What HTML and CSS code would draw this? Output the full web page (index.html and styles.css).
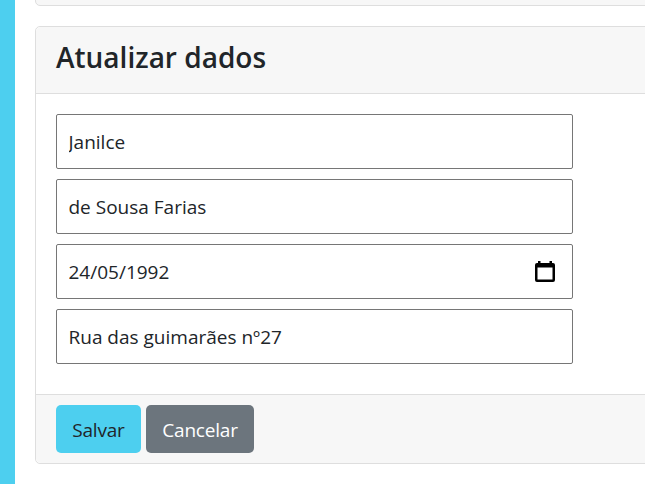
FILE: index.html
```html
<!DOCTYPE html>
<html lang="pt-BR">
<head>
<meta charset="UTF-8">
<meta name="viewport" content="width=device-width, initial-scale=1.0">
<title>Atualizar dados</title>
<link rel="stylesheet" href="styles.css">
</head>
<body>
<div class="sidebar"></div>
<main class="content">
	<div class="card card-previous"></div>
	<section class="card">
		<header class="card-header">
			<h1>Atualizar dados</h1>
		</header>
		<form class="card-body">
			<input class="form-control" type="text" value="Janilce">
			<input class="form-control" type="text" value="de Sousa Farias">
			<div class="date-field">
				<input class="form-control" type="text" value="24/05/1992">
				<svg class="date-icon" viewBox="0 0 20 21" aria-hidden="true">
					<path d="M2 2h16a2 2 0 0 1 2 2v15a2 2 0 0 1-2 2H2a2 2 0 0 1-2-2V4a2 2 0 0 1 2-2zM2.500 6.500v12h15v-12z" fill-rule="evenodd"/>
					<rect x="3" y="0" width="2.500" height="3"/>
					<rect x="14.500" y="0" width="2.500" height="3"/>
				</svg>
			</div>
			<input class="form-control" type="text" value="Rua das guimarães nº27">
		</form>
		<footer class="card-footer">
			<button class="btn btn-info" type="button">Salvar</button>
			<button class="btn btn-secondary" type="button">Cancelar</button>
		</footer>
	</section>
</main>
</body>
</html>
```

FILE: styles.css
```css
* {
	box-sizing: border-box;
}
body {
	margin: 0;
	height: 484px;
	overflow: hidden;
	display: flex;
	background-color: #fff;
	color: #212529;
	font-family: "Open Sans", "Noto Sans", sans-serif;
}
.sidebar {
	flex: none;
	width: 15px;
	background-color: #4dcfef;
}
.content {
	flex: none;
	width: 650px;
	padding-left: 20px;
	margin-top: -40px;
}
.card {
	background-color: #fff;
	border: 1px solid #dedede;
	border-radius: 5px;
}
.card-previous {
	height: 46px;
	margin-bottom: 20px;
	background-color: #f7f7f7;
}
.card-header {
	height: 67px;
	padding: 0 20px 4px;
	display: flex;
	align-items: center;
	background-color: #f7f7f7;
	border-bottom: 1px solid #dedede;
	border-radius: 5px 5px 0 0;
}
.card-header h1 {
	margin: 0;
	font-size: 28px;
	font-weight: 600;
	line-height: 1.2;
}
.card-body {
	padding: 20px 20px 30px;
	display: flex;
	flex-direction: column;
	gap: 10px;
}
.form-control {
	display: block;
	width: 517px;
	height: 55px;
	padding: 1px 11.500px 0;
	border: 1px solid #767676;
	border-radius: 2px;
	background-color: #fff;
	color: #212529;
	font-family: inherit;
	font-size: 19px;
}
.date-field {
	position: relative;
	width: 517px;
}
.date-icon {
	position: absolute;
	left: 479px;
	top: 17px;
	width: 20px;
	height: 21px;
	fill: #000;
}
.card-footer {
	height: 69px;
	padding: 10px 20px;
	display: flex;
	gap: 5px;
	background-color: #f7f7f7;
	border-top: 1px solid #dedede;
	border-radius: 0 0 5px 5px;
}
.btn {
	height: 48px;
	padding: 1px 12px 0;
	border: 0;
	border-radius: 5px;
	font-family: inherit;
	font-size: 19px;
	letter-spacing: -0.2px;
}
.btn-info {
	width: 85px;
	background-color: #4dcfef;
	color: #212529;
}
.btn-secondary {
	width: 108px;
	background-color: #6c757d;
	color: #fff;
}
```
